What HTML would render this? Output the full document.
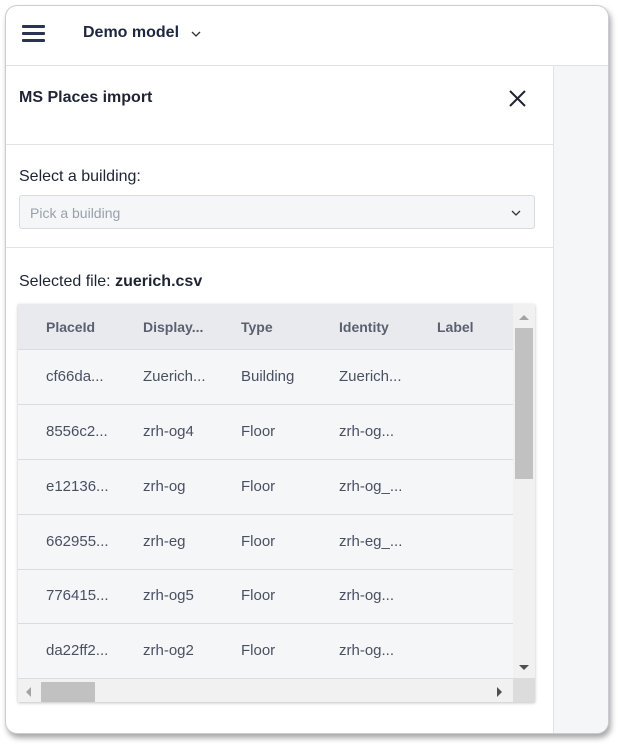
<!DOCTYPE html>
<html><head><style>
*{box-sizing:border-box;margin:0;padding:0}
body{width:623px;height:747px;background:#fff;font-family:"Liberation Sans",sans-serif;position:relative;overflow:hidden}
.card{position:absolute;left:5px;top:5px;width:604px;height:729px;border:1px solid #c9ccd1;border-radius:12px;overflow:hidden;background:#fff;box-shadow:2px 4px 6px rgba(0,0,0,.35)}
.hdr{position:absolute;left:0;top:0;width:100%;height:60px;border-bottom:1px solid #dfe1e5}
.side{position:absolute;left:547px;top:60px;right:0;bottom:0;background:#f5f6f8;border-left:1px solid #e1e3e6}
.t{position:absolute;color:#1e2433;white-space:nowrap}
.line{position:absolute;left:0;width:547px;height:1px;background:#e1e3e6}
.sel{position:absolute;left:13px;top:189px;width:516px;height:34px;border:1px solid #d7dadf;border-radius:3px;background:#f5f6f8}
.tbl{position:absolute;left:12px;top:298px;width:517px;height:398px;box-shadow:0 1px 3px rgba(0,0,0,.25);background:#f5f6f8;overflow:hidden}
.row{position:absolute;left:0;width:495px;height:55px;border-bottom:1px solid #d9dce2;font-size:15px;color:#4a5063}
.row span{position:absolute;top:18px}
</style></head><body>
<div class="card">
 <div class="hdr">
  <div style="position:absolute;left:16px;top:19px;width:23px;height:3px;background:#2a3352;border-radius:1px"></div>
  <div style="position:absolute;left:16px;top:26px;width:23px;height:3px;background:#2a3352;border-radius:1px"></div>
  <div style="position:absolute;left:16px;top:33px;width:23px;height:3px;background:#2a3352;border-radius:1px"></div>
  <div class="t" style="left:77px;top:18px;font-size:16px;font-weight:bold;color:#1e2640">Demo model</div>
  <svg style="position:absolute;left:185px;top:24px" width="10" height="8"><path d="M1 2 L5 6 L9 2" fill="none" stroke="#333" stroke-width="1.3"/></svg>
 </div>
 <div class="side"></div>
 <div class="t" style="left:13px;top:83px;font-size:16px;font-weight:bold">MS Places import</div>
 <svg style="position:absolute;left:503px;top:84px" width="17" height="17"><path d="M1 1 L16 16 M16 1 L1 16" stroke="#1e2433" stroke-width="2"/></svg>
 <div class="line" style="top:138px"></div>
 <div class="t" style="left:13px;top:162px;font-size:16px">Select a building:</div>
 <div class="sel"><div class="t" style="left:10px;top:9px;font-size:14px;color:#9aa0aa">Pick a building</div>
  <svg style="position:absolute;left:491px;top:13px" width="10" height="8"><path d="M1 2 L5 6 L9 2" fill="none" stroke="#333" stroke-width="1.3"/></svg></div>
 <div class="line" style="top:241px"></div>
 <div class="t" style="left:13px;top:267px;font-size:16px">Selected file: <b>zuerich.csv</b></div>
 <div class="tbl">
  <div class="row" style="top:0;height:46px;background:#e9eaee;font-weight:bold;color:#5a6070;font-size:14px">
   <span style="left:28px;top:15px">PlaceId</span><span style="left:125px;top:15px">Display...</span><span style="left:223px;top:15px">Type</span><span style="left:321px;top:15px">Identity</span><span style="left:419px;top:15px">Label</span></div>
  <div class="row" style="top:46px"><span style="left:28px">cf66da...</span><span style="left:125px">Zuerich...</span><span style="left:223px">Building</span><span style="left:321px">Zuerich...</span></div>
  <div class="row" style="top:101px"><span style="left:28px">8556c2...</span><span style="left:125px">zrh-og4</span><span style="left:223px">Floor</span><span style="left:321px">zrh-og...</span></div>
  <div class="row" style="top:156px"><span style="left:28px">e12136...</span><span style="left:125px">zrh-og</span><span style="left:223px">Floor</span><span style="left:321px">zrh-og_...</span></div>
  <div class="row" style="top:211px"><span style="left:28px">662955...</span><span style="left:125px">zrh-eg</span><span style="left:223px">Floor</span><span style="left:321px">zrh-eg_...</span></div>
  <div class="row" style="top:265px"><span style="left:28px">776415...</span><span style="left:125px">zrh-og5</span><span style="left:223px">Floor</span><span style="left:321px">zrh-og...</span></div>
  <div class="row" style="top:320px"><span style="left:28px">da22ff2...</span><span style="left:125px">zrh-og2</span><span style="left:223px">Floor</span><span style="left:321px">zrh-og...</span></div>
  <div style="position:absolute;left:495px;top:0;width:22px;height:374px;background:#f1f1f1"></div>
  <div style="position:absolute;left:497px;top:24px;width:18px;height:151px;background:#c1c1c1"></div>
  <svg style="position:absolute;left:500px;top:9px" width="12" height="8"><path d="M1 7 L6 2 L11 7Z" fill="#a3a3a3"/></svg>
  <svg style="position:absolute;left:500px;top:360px" width="12" height="8"><path d="M1 1 L6 6 L11 1Z" fill="#505050"/></svg>
  <div style="position:absolute;left:0;top:375px;width:495px;height:23px;background:#f1f1f1"></div>
  <div style="position:absolute;left:495px;top:374px;width:22px;height:24px;background:#dcdcdc"></div>
  <div style="position:absolute;left:23px;top:378px;width:54px;height:20px;background:#c1c1c1"></div>
  <svg style="position:absolute;left:7px;top:382px" width="8" height="12"><path d="M6 1 L1 6 L6 11Z" fill="#a3a3a3"/></svg>
  <svg style="position:absolute;left:478px;top:382px" width="8" height="12"><path d="M1 1 L6 6 L1 11Z" fill="#505050"/></svg>
 </div>
</div>
</body></html>
